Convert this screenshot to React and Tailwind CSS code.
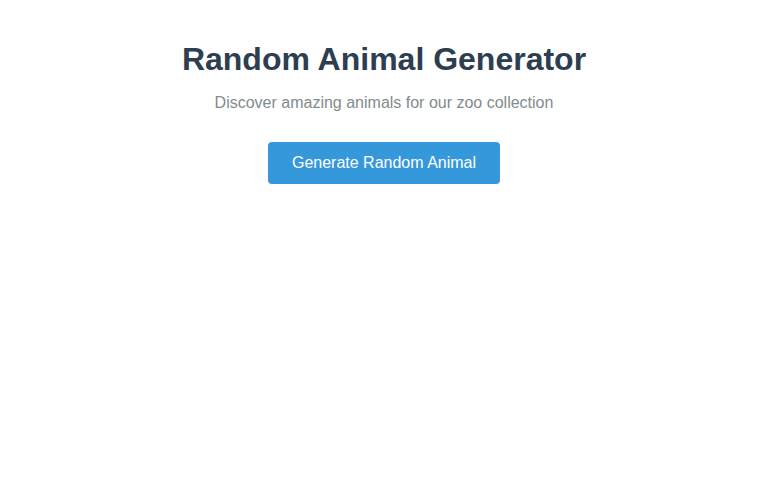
import React, { useState } from 'react';

const animals = ['Lion', 'Elephant', 'Giraffe', 'Zebra', 'Penguin', 'Koala', 'Tiger', 'Panda'];

const App = () => {
    const [animal, setAnimal] = useState(null);

    const pickAnimal = () => {
        setAnimal(animals[Math.floor(Math.random() * animals.length)]);
    };

    return (
        <div className="min-h-screen bg-white px-5 pt-[41px] text-center font-['Liberation_Sans',Arial,sans-serif]">
            <h1 className="text-[32px] font-bold leading-[37px] text-[#2c3e50]">Random Animal Generator</h1>
            <p className="mt-4 text-base leading-[18px] text-[#7f8c8d]">Discover amazing animals for our zoo collection</p>

            <button
                onClick={pickAnimal}
                className="mt-[30px] h-[42px] rounded bg-[#3498db] px-6 text-base text-white hover:bg-[#2980b9]"
            >
                Generate Random Animal
            </button>

            {animal && (
                <p className="mt-6 text-xl font-bold text-[#2c3e50]">{animal}</p>
            )}
        </div>
    );
};

export default App;
